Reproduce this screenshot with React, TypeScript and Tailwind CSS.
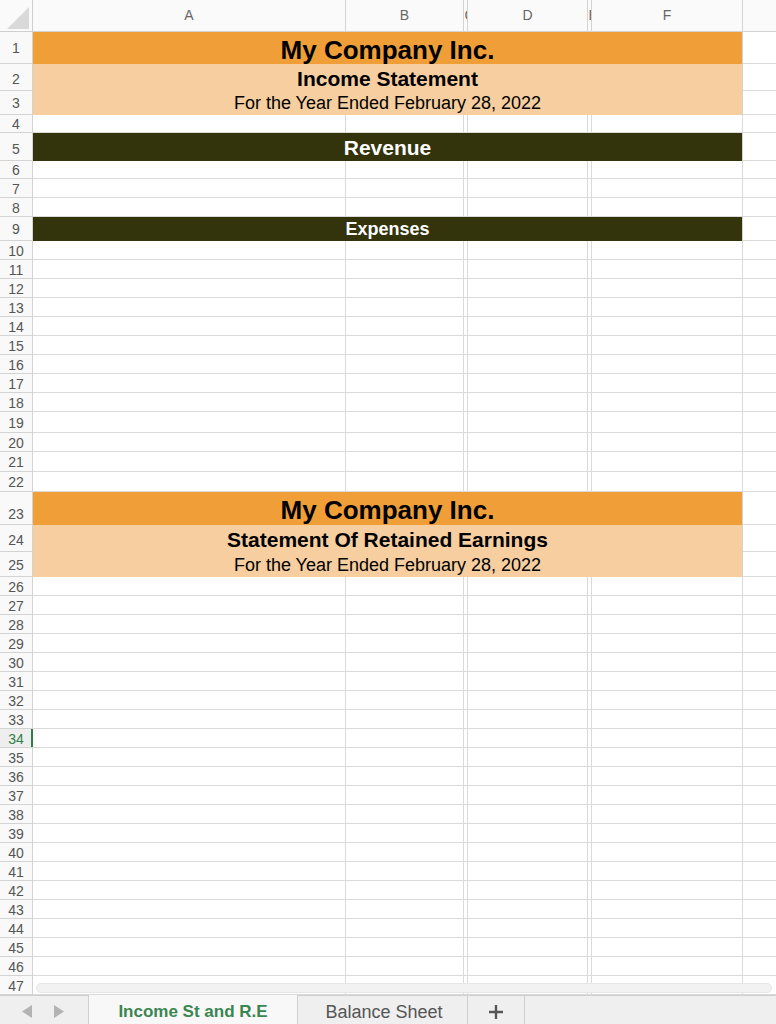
const cols = [
  { key: "A", w: "w-[313px]" },
  { key: "B", w: "w-[118px]" },
  { key: "C", w: "w-[4px]" },
  { key: "D", w: "w-[120px]" },
  { key: "E", w: "w-[4px]" },
  { key: "F", w: "w-[151px]" },
];

// row heights (px) for rows that differ from the default 19
const heights: Record<number, string> = {
  1: "h-[32px]",
  2: "h-[27px]",
  3: "h-[24px]",
  4: "h-[18px]",
  5: "h-[28px]",
  6: "h-[18px]",
  9: "h-[24px]",
  19: "h-[21px]",
  21: "h-[20px]",
  22: "h-[20px]",
  23: "h-[33px]",
  24: "h-[27px]",
  25: "h-[25px]",
};

type Merged = { text: string; cls: string };

const merged: Record<number, Merged> = {
  1: { text: "My Company Inc.", cls: "bg-[#f09e38] text-[26px] font-bold text-black pt-[3px]" },
  2: { text: "Income Statement", cls: "bg-[#f7ce9f] text-[21px] font-bold text-black pt-[2px]" },
  3: { text: "For the Year Ended February 28, 2022", cls: "bg-[#f7ce9f] text-[18px] text-black" },
  5: { text: "Revenue", cls: "bg-[#33330c] text-[21px] font-bold text-white" },
  9: { text: "Expenses", cls: "bg-[#33330c] text-[18px] font-bold text-white" },
  23: { text: "My Company Inc.", cls: "bg-[#f09e38] text-[26px] font-bold text-black pt-[3px]" },
  24: { text: "Statement Of Retained Earnings", cls: "bg-[#f7ce9f] text-[21px] font-bold text-black pt-[2px]" },
  25: { text: "For the Year Ended February 28, 2022", cls: "bg-[#f7ce9f] text-[18px] text-black" },
};

const rowNums = Array.from({ length: 47 }, (_, i) => i + 1);

const Row = ({ n }: { n: number }) => {
  const h = heights[n] ?? "h-[19px]";
  const m = merged[n];
  const selected = n === 34;
  return (
    <div className={`flex ${h}`}>
      {/* row header */}
      <div
        className={`relative w-[33px] shrink-0 border-r border-b border-[#d3d3d3] flex items-center justify-center text-[14px] leading-none ${
          n === 23 ? "pt-[12px]" : n === 5 || n === 2 || n === 24 ? "pt-[4px]" : "pt-[1px]"
        } ${selected ? "bg-[#eeeeee] text-[#2f7d48]" : "bg-[#f9f9f9] text-[#555555]"}`}
      >
        {n}
        {selected && <div className="absolute right-[-1px] top-0 bottom-0 w-[2px] bg-[#2f7d48]" />}
      </div>

      {m ? (
        <div className={`w-[710px] shrink-0 border-r border-[#d3d3d3] flex items-center justify-center leading-none ${m.cls}`}>
          {m.text}
        </div>
      ) : (
        cols.map((c) => <div key={c.key} className={`${c.w} shrink-0 border-r border-b border-[#dadada]`} />)
      )}

      <div className="flex-1 border-b border-[#dadada]" />
    </div>
  );
};

const App = () => {
  return (
    <div
      className="relative h-[1024px] w-full overflow-hidden bg-white"
      style={{ fontFamily: '"Liberation Sans", Arial, sans-serif' }}
    >
      {/* column headers */}
      <div className="flex h-[32px] bg-[#fafafa]">
        <div className="relative w-[33px] shrink-0 border-r border-b border-[#cfcfcf]">
          <svg className="absolute left-[7px] top-[7px]" width="22" height="22" viewBox="0 0 22 22">
            <polygon points="0,22 22,0 22,22" fill="#d9d9d9" />
          </svg>
        </div>
        {cols.map((c) => (
          <div
            key={c.key}
            className={`${c.w} shrink-0 overflow-hidden border-r border-b border-[#d3d3d3] flex items-center justify-center text-[14px] text-[#666666]`}
          >
            {c.w === "w-[4px]" ? <span className="w-[2px] overflow-hidden">{c.key}</span> : c.key}
          </div>
        ))}
        <div className="flex-1 border-b border-[#d3d3d3]" />
      </div>

      {rowNums.map((n) => (
        <Row key={n} n={n} />
      ))}

      {/* horizontal scroll bar */}
      <div className="absolute left-[36px] right-[4px] top-[983px] h-[10px] rounded-full bg-[#f2f2f2] border border-[#e6e6e6]" />

      {/* sheet tabs */}
      <div className="flex h-[29px] bg-[#efefef]">
        <div className="w-[88px] shrink-0 border-t border-[#cfcfcf] flex items-center gap-[22px] pl-[22px] pt-[3px]">
          <svg width="10" height="13" viewBox="0 0 10 13">
            <polygon points="10,0 0,6.5 10,13" fill="#b3b3b3" />
          </svg>
          <svg width="10" height="13" viewBox="0 0 10 13">
            <polygon points="0,0 10,6.5 0,13" fill="#b3b3b3" />
          </svg>
        </div>
        <div className="w-[210px] shrink-0 bg-[#f8f8f8] border-l border-r border-[#cfcfcf] flex items-center justify-center pt-[4px] text-[17px] font-bold text-[#3a8650]">
          Income St and R.E
        </div>
        <div className="w-[170px] shrink-0 border-t border-r border-[#cfcfcf] flex items-center justify-center pt-[4px] pl-[3px] text-[18px] text-[#555555]">
          Balance Sheet
        </div>
        <div className="w-[57px] shrink-0 border-t border-r border-[#cfcfcf] flex items-center justify-center pt-[4px]">
          <svg width="16" height="16" viewBox="0 0 16 16">
            <path d="M8 1v14M1 8h14" stroke="#555555" strokeWidth="2.4" />
          </svg>
        </div>
        <div className="flex-1 border-t border-[#cfcfcf]" />
      </div>
    </div>
  );
};

export default App;
